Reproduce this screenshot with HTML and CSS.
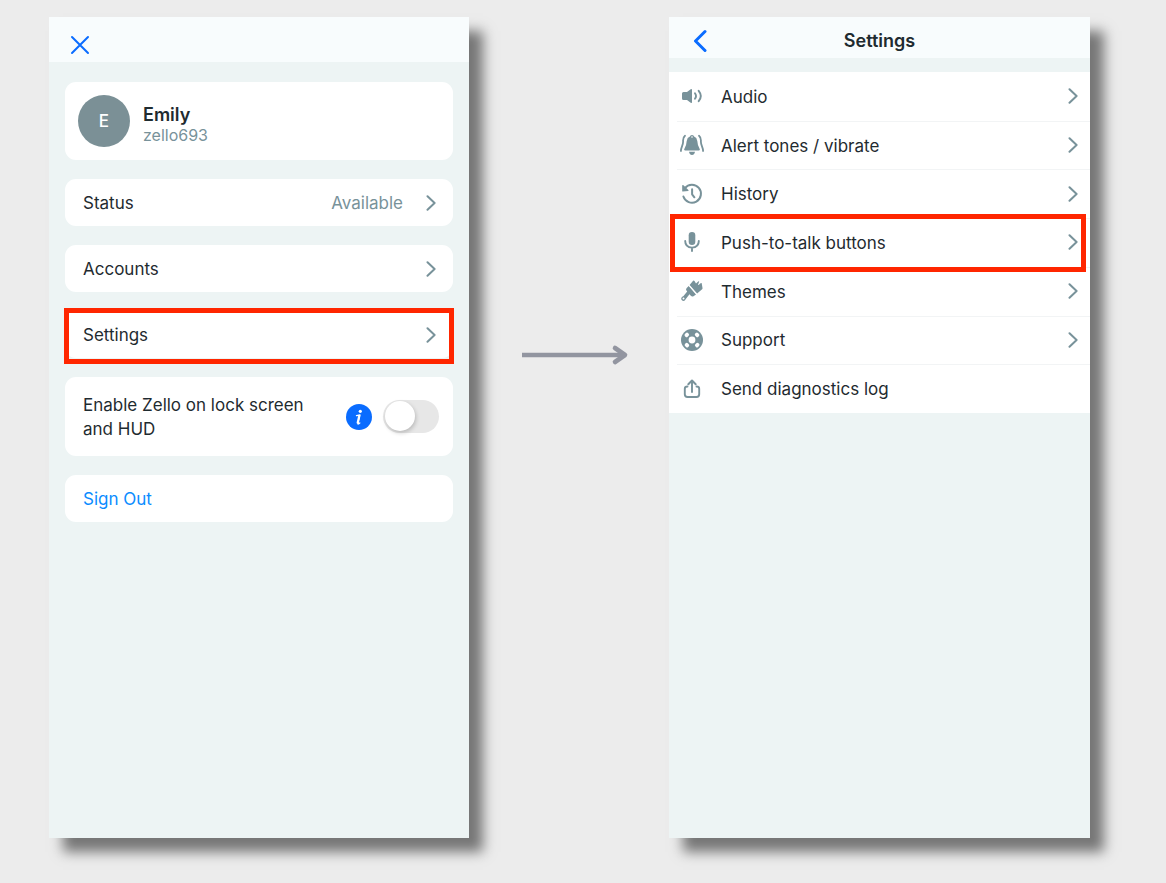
FILE: index.html
```html
<!DOCTYPE html>
<html lang="en">
<head>
<meta charset="utf-8">
<meta name="viewport" content="width=device-width, initial-scale=1">
<title>Settings</title>
<link rel="stylesheet" href="styles.css">
</head>
<body>
<svg class="defs" aria-hidden="true">
  <symbol id="chevron" viewBox="0 0 10 16"><path d="M1.500 1.200 8.600 8l-7.100 6.800" fill="none" stroke="currentColor" stroke-width="2" stroke-linecap="round" stroke-linejoin="round"/></symbol>
</svg>
<main class="flow">
  <section class="screen" aria-label="Profile">
    <header class="bar bar-profile">
      <button class="icon-button" type="button" aria-label="Close">
        <svg width="20" height="20" viewBox="0 0 20 20"><path d="M2 2l16 16M18 2 2 18" stroke="currentColor" stroke-width="2" stroke-linecap="round"/></svg>
      </button>
    </header>
    <div class="cards">
      <button class="card profile" type="button">
        <span class="avatar">E</span>
        <span class="who"><span class="name">Emily</span><span class="handle">zello693</span></span>
      </button>
      <button class="card" type="button"><span class="label">Status</span><span class="value">Available</span><svg class="chevron"><use href="#chevron"/></svg></button>
      <button class="card" type="button"><span class="label">Accounts</span><svg class="chevron"><use href="#chevron"/></svg></button>
      <button class="card marked" type="button"><span class="label">Settings</span><svg class="chevron"><use href="#chevron"/></svg></button>
      <div class="card tall">
        <label class="label lock-label" for="lock">Enable Zello on lock screen and HUD</label>
        <button class="info" type="button" aria-label="More information">
          <svg width="26" height="26" viewBox="0 0 26 26"><circle cx="13" cy="13" r="13" fill="#0a6cff"/><circle cx="14.300" cy="7.300" r="1.600" fill="#fff"/><path d="M10.500 11.700l3.500-.7-2 8.600q-.2 1 1.800-.6" fill="none" stroke="#fff" stroke-width="1.300" stroke-linejoin="round" stroke-linecap="round"/><path d="M13.200 11.700l-1.600 7" stroke="#fff" stroke-width="2" stroke-linecap="round"/></svg>
        </button>
        <input class="switch" id="lock" type="checkbox" role="switch">
      </div>
      <button class="card signout" type="button"><span class="label">Sign Out</span></button>
    </div>
  </section>

  <svg class="arrow" width="108" height="22" viewBox="0 0 108 22" aria-hidden="true"><path d="M1 11h102" stroke="#9295a0" stroke-width="4.600"/><path d="M94 4l10 7-10 7" fill="none" stroke="#9295a0" stroke-width="4.600" stroke-linecap="round" stroke-linejoin="round"/></svg>

  <section class="screen" aria-label="Settings">
    <header class="bar bar-settings">
      <button class="icon-button" type="button" aria-label="Back">
        <svg width="14" height="24" viewBox="0 0 14 24"><path d="M12 2.500 2.500 12l9.500 9.500" fill="none" stroke="currentColor" stroke-width="3" stroke-linecap="round" stroke-linejoin="round"/></svg>
      </button>
      <h1 class="title">Settings</h1>
    </header>
    <nav class="menu">
      <button class="row" type="button">
        <svg class="glyph" viewBox="0 0 24 24"><path d="M2 9.500q0-1.500 1.500-1.500H7l3.700-2.700q1.300-.8 1.300.7v12q0 1.500-1.300.7L7 16H3.500Q2 16 2 14.500z" fill="currentColor"/><path d="M15 9.200q2 2.800 0 5.600M18.700 6.800q4.200 5.200 0 10.400" fill="none" stroke="currentColor" stroke-width="1.900" stroke-linecap="round"/></svg>
        <span class="label">Audio</span><svg class="chevron"><use href="#chevron"/></svg>
      </button>
      <button class="row" type="button">
        <svg class="glyph" viewBox="0 0 24 24"><path d="M12 2.100q1.900 0 2.100 1.500 2.800 1 3.200 4.400.3 5 2.300 7.700 1 1.700-.7 1.800H5.100q-1.700-.1-.7-1.800Q6.400 13 6.700 8q.4-3.400 3.200-4.400.2-1.500 2.100-1.500zM9 18.700h6q-.7 3.200-3 3.200t-3-3.200z" fill="currentColor"/><circle cx="12" cy="4" r=".8" fill="#fff"/><path d="M5 2.800Q2.800 4.500 3.100 8.500C3.300 12 1 14 .9 18M19 2.800Q21.200 4.500 20.900 8.500c-.2 3.500 2.100 5.500 2.200 9.500" fill="none" stroke="currentColor" stroke-width="1.800" stroke-linecap="round"/></svg>
        <span class="label">Alert tones / vibrate</span><svg class="chevron"><use href="#chevron"/></svg>
      </button>
      <button class="row" type="button">
        <svg class="glyph" viewBox="0 0 24 24"><path d="M4.900 6.100A9 9 0 1 1 3.400 14.500" fill="none" stroke="currentColor" stroke-width="2" stroke-linecap="round"/><path d="M2.200 3.700v5.200q0 .7.700.7l5.300-.7q.8-.3.200-.9L3.500 3.300q-1.300-.8-1.300.4z" fill="currentColor"/><path d="M12.100 7.300v5l2.300 3" fill="none" stroke="currentColor" stroke-width="2" stroke-linecap="round" stroke-linejoin="round"/></svg>
        <span class="label">History</span><svg class="chevron"><use href="#chevron"/></svg>
      </button>
      <button class="row marked" type="button">
        <svg class="glyph" viewBox="0 0 24 24"><rect x="8.700" y="2" width="6.600" height="13" rx="3.300" fill="currentColor"/><path d="M5.200 11q0 6.300 6.800 6.600Q18.800 17.300 18.800 11M12 17.600V21" fill="none" stroke="currentColor" stroke-width="1.900" stroke-linecap="round"/></svg>
        <span class="label">Push-to-talk buttons</span><svg class="chevron"><use href="#chevron"/></svg>
      </button>
      <button class="row" type="button">
        <svg class="glyph" viewBox="0 0 24 24"><path d="M13.100 1.800q.8-.7 1.400.1L16 4.400l2.200-2q.6-.4 1 .1l-1.200 3.200.6.400 2.300-2q.6-.4.800.2l.800 4.700q.2.700-.4 1.200l-5 4.200L9.600 6z" fill="currentColor"/><path d="M8.700 7.100 16 15.500l-2.500 1.700q-1.500.7-2.700-.5L9.500 15.300 5.800 20q-1 2.300-3.200 1.800-1.600-.7-1.400-2.500.3-1.400 2.300-2.300l3.700-4.400-.8-1q-.9-1.500.3-2.700z" fill="currentColor"/><path d="M9.100 6.600l7.300 8.300" stroke="#fff" stroke-width=".8"/><circle cx="3.500" cy="19.500" r="1" fill="#fff"/></svg>
        <span class="label">Themes</span><svg class="chevron"><use href="#chevron"/></svg>
      </button>
      <button class="row" type="button">
        <svg class="glyph" viewBox="0 0 24 24"><circle cx="12" cy="12" r="11" fill="currentColor"/><circle cx="12" cy="12" r="3.400" fill="#fff"/><g fill="#fff"><rect id="slot" x="4.900" y="4.700" width="3.800" height="4.400" rx="1.500" transform="rotate(45 6.800 6.900)"/><use href="#slot" transform="rotate(90 12 12)"/><use href="#slot" transform="rotate(180 12 12)"/><use href="#slot" transform="rotate(270 12 12)"/></g></svg>
        <span class="label">Support</span><svg class="chevron"><use href="#chevron"/></svg>
      </button>
      <button class="row" type="button">
        <svg class="glyph" viewBox="0 0 24 24"><path d="M7.500 9.500q-2.700 0-2.700 2.300v5.500q0 2.700 2.700 2.700h9q2.700 0 2.700-2.700v-5.500q0-2.300-2.700-2.300M12 15V5" fill="none" stroke="currentColor" stroke-width="1.900" stroke-linecap="round"/><path d="M8.300 7.200 12 3.500l3.700 3.700" fill="none" stroke="currentColor" stroke-width="2" stroke-linecap="round" stroke-linejoin="round"/></svg>
        <span class="label">Send diagnostics log</span>
      </button>
    </nav>
  </section>
</main>
</body>
</html>
```

FILE: styles.css
```css
* { box-sizing: border-box; }

body {
  margin: 0;
  background: #ececec;
  color: #1f2b30;
  font-family: Inter, "Liberation Sans", sans-serif;
  font-size: 17px;
  line-height: 24px;
}

button {
  margin: 0;
  padding: 0;
  border: 0;
  background: none;
  color: inherit;
  font: inherit;
  text-align: left;
  cursor: pointer;
}

.defs { position: absolute; width: 0; height: 0; }

.flow {
  display: grid;
  grid-template-columns: 420fr 200px 421fr;
  min-height: 100vh;
  padding: 17px 76px 45px 49px;
}

.screen {
  background: #edf4f4;
  box-shadow: 14px 14px 12px #767676;
}

.arrow { justify-self: center; margin-top: 327px; margin-left: 12px; }

.bar { display: flex; align-items: center; background: #f8fcfd; }
.bar-profile { height: 45px; padding: 10px 21px 0; }
.bar-settings { position: relative; height: 41px; padding: 6px 24px 0; }
.icon-button { display: flex; color: #0a6cff; }

.title {
  position: absolute;
  inset: 12px 0 auto;
  margin: 0;
  font-size: 18px;
  font-weight: 600;
  text-align: center;
  pointer-events: none;
}

.cards { display: flex; flex-direction: column; gap: 19px; padding: 20px 16px; }

.card {
  position: relative;
  display: flex;
  align-items: center;
  min-height: 47px;
  padding: 0 17px 0 18px;
  border-radius: 11px;
  background: #fff;
}

.card .label, .row .label { flex: 1; }
.label, .value { padding-top: 1px; }
.value { margin-right: 23px; color: #78929a; }
.chevron { width: 10px; height: 16px; color: #78929a; }

.profile { gap: 13px; min-height: 78px; padding: 0 13px; }

.avatar {
  display: grid;
  place-items: center;
  width: 52px;
  height: 52px;
  border-radius: 50%;
  background: #7b9096;
  color: #fff;
  font-weight: 500;
}

.who { display: flex; flex-direction: column; padding-top: 8px; line-height: 21px; }
.name { font-size: 18px; font-weight: 600; }
.handle { color: #78929a; font-size: 16px; }

.tall { min-height: 79px; padding: 0 14px 0 18px; }
.card .lock-label { max-width: 235px; margin-right: auto; }
.info { display: flex; margin-right: 11px; }

.switch {
  appearance: none;
  width: 56px;
  height: 33px;
  margin: 0;
  padding: 1px 2px;
  border-radius: 17px;
  background: #e7e7e7;
}

.switch::before {
  content: "";
  display: block;
  width: 30px;
  height: 30px;
  border-radius: 50%;
  background: #fff;
  box-shadow: 1px 2px 4px rgba(0, 0, 0, 0.2);
}

.switch:checked::before { margin-left: auto; }

.signout { color: #0a8cff; }

.menu {
  display: grid;
  grid-auto-rows: 1fr;
  min-height: 341px;
  margin-top: 14px;
  background: #fff;
}

.row {
  position: relative;
  display: flex;
  align-items: center;
  gap: 17px;
  padding: 0 12px 0 11px;
}

.row + .row { background: linear-gradient(#f2f4f5, #f2f4f5) 8px 0 / 100% 1px no-repeat; }
.glyph { width: 24px; height: 24px; color: #78929a; }

.marked::after {
  content: "";
  position: absolute;
  z-index: 1;
  inset: -3px -1px -6px;
  border: 5px solid #ff2600;
}

.row.marked::after { inset: -4px 4px -5px 1px; }
```
